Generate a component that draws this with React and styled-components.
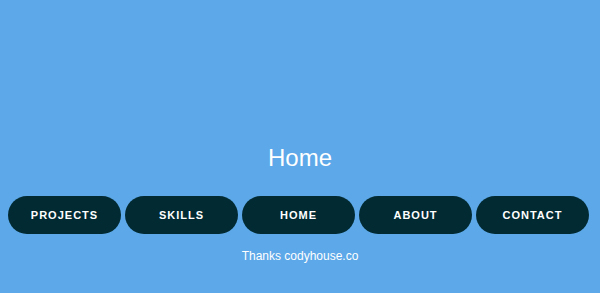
import React from 'react';
import styled, { createGlobalStyle } from 'styled-components';

const GlobalStyle = createGlobalStyle`
  html, body {
    margin: 0;
    padding: 0;
    background: #5ca8e8;
    font-family: "Liberation Sans", Arial, sans-serif;
  }
`;

const Page = styled.div`
  height: 293px;
  display: flex;
  flex-direction: column;
  padding-top: 144px;
  box-sizing: border-box;
`;

const Title = styled.h1`
  margin: 0;
  text-align: center;
  color: #fff;
  font-weight: normal;
  font-size: 24px;
  line-height: 28px;
`;

const Nav = styled.nav`
  display: flex;
  gap: 4px;
  padding: 0 8px;
  margin-top: 24px;
`;

const NavButton = styled.a`
  width: 113px;
  height: 38px;
  border-radius: 19px;
  background: #022a32;
  color: #fff;
  display: flex;
  align-items: center;
  justify-content: center;
  font-weight: bold;
  font-size: 11px;
  letter-spacing: 1px;
  text-transform: uppercase;
  text-decoration: none;
  cursor: pointer;
`;

const Credit = styled.p`
  margin: 14px 0 0;
  text-align: center;
  color: #fff;
  font-size: 12px;
  line-height: 16px;
`;

const items = ['Projects', 'Skills', 'Home', 'About', 'Contact'];

const App = () => (
  <>
    <GlobalStyle />
    <Page>
      <Title>Home</Title>
      <Nav>
        {items.map((item) => (
          <NavButton key={item}>{item}</NavButton>
        ))}
      </Nav>
      <Credit>Thanks codyhouse.co</Credit>
    </Page>
  </>
);

export default App;
